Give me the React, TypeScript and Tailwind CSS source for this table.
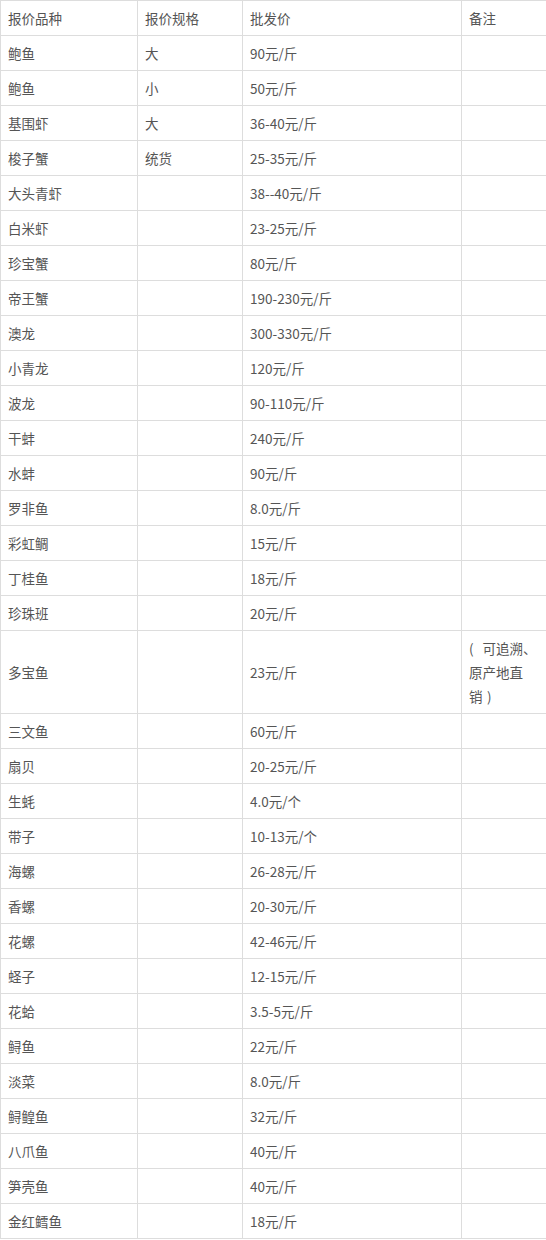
import type { ReactNode } from 'react';

const note: ReactNode = (
  <>
    <span className="inline-block w-[1em] text-left">(</span>可追溯、原产地直
    <span className="whitespace-nowrap">
      销<span className="inline-block w-[1em] text-center">)</span>
    </span>
  </>
);

const rows: [string, string, string, ReactNode?][] = [
  ['鲍鱼', '大', '90元/斤'],
  ['鲍鱼', '小', '50元/斤'],
  ['基围虾', '大', '36-40元/斤'],
  ['梭子蟹', '统货', '25-35元/斤'],
  ['大头青虾', '', '38--40元/斤'],
  ['白米虾', '', '23-25元/斤'],
  ['珍宝蟹', '', '80元/斤'],
  ['帝王蟹', '', '190-230元/斤'],
  ['澳龙', '', '300-330元/斤'],
  ['小青龙', '', '120元/斤'],
  ['波龙', '', '90-110元/斤'],
  ['干蚌', '', '240元/斤'],
  ['水蚌', '', '90元/斤'],
  ['罗非鱼', '', '8.0元/斤'],
  ['彩虹鲷', '', '15元/斤'],
  ['丁桂鱼', '', '18元/斤'],
  ['珍珠班', '', '20元/斤'],
  ['多宝鱼', '', '23元/斤', note],
  ['三文鱼', '', '60元/斤'],
  ['扇贝', '', '20-25元/斤'],
  ['生蚝', '', '4.0元/个'],
  ['带子', '', '10-13元/个'],
  ['海螺', '', '26-28元/斤'],
  ['香螺', '', '20-30元/斤'],
  ['花螺', '', '42-46元/斤'],
  ['蛏子', '', '12-15元/斤'],
  ['花蛤', '', '3.5-5元/斤'],
  ['鲟鱼', '', '22元/斤'],
  ['淡菜', '', '8.0元/斤'],
  ['鲟鳇鱼', '', '32元/斤'],
  ['八爪鱼', '', '40元/斤'],
  ['笋壳鱼', '', '40元/斤'],
  ['金红鳕鱼', '', '18元/斤'],
];

const cell = 'border border-[#dddddd] px-[7px] py-[5px] align-middle text-left font-normal leading-[24px]';

export default function App() {
  return (
    <div className="w-[546px] bg-white text-[13.5px] text-[#555555] [font-family:'Noto_Sans_CJK_SC','Microsoft_YaHei',sans-serif]">
      <table className="w-[546px] table-fixed border-collapse">
        <colgroup>
          <col className="w-[137px]" />
          <col className="w-[105px]" />
          <col className="w-[219px]" />
          <col className="w-[85px]" />
        </colgroup>
        <thead>
          <tr>
            <th className={cell}>报价品种</th>
            <th className={cell}>报价规格</th>
            <th className={cell}>批发价</th>
            <th className={cell}>备注</th>
          </tr>
        </thead>
        <tbody>
          {rows.map((r, i) => (
            <tr key={i}>
              <td className={cell}>{r[0]}</td>
              <td className={cell}>{r[1]}</td>
              <td className={cell}>{r[2]}</td>
              <td className={cell}>{r[3] ?? ''}</td>
            </tr>
          ))}
        </tbody>
      </table>
    </div>
  );
}
